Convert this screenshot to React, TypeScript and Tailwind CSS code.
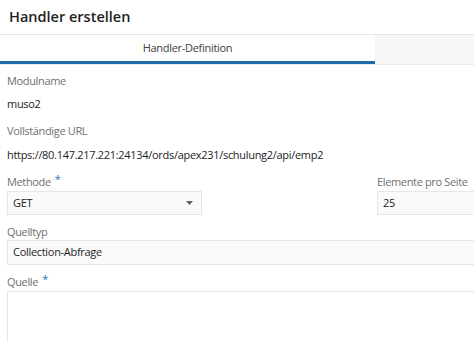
const label = "text-[11px] leading-[16px] tracking-[-0.35px] text-[#707070] whitespace-nowrap";
const value = "text-[11px] leading-[16px] tracking-[-0.3px] text-[#1d1d1d] whitespace-nowrap";
const box = "bg-[#fafafa] border border-[#e6e6e6] flex items-center px-[5px] text-[11px] tracking-[-0.3px] text-[#1d1d1d]";

function Req() {
  return <span className="text-[#2a7ab8] text-[11px] relative -top-[3px] ml-[4px]">*</span>;
}

export default function App() {
  return (
    <div className="w-[474px] h-[342px] overflow-hidden bg-white font-['Open_Sans',sans-serif]">
      {/* Header */}
      <div className="h-[35px] pl-[9px] pt-[7px] border-b border-[#e6e6e6]">
        <h1 className="text-[14.5px] leading-[20px] font-semibold text-[#1f1f1f]">Handler erstellen</h1>
      </div>

      {/* Tabs */}
      <div className="flex h-[30px] border-b border-[#ebebeb]">
        <div className="w-[375px] flex items-center justify-center border-b-[3px] border-[#1f6aa6] text-[11px] tracking-[-0.3px] text-[#404040]">
          Handler-Definition
        </div>
        <div className="flex-1 bg-[#f6f6f6]" />
      </div>

      {/* Form */}
      <div className="pl-[7px] pt-[8px]">
        <div className={label}>Modulname</div>
        <div className={`${value} mt-[7px]`}>muso2</div>
        <div className={`${label} mt-[11px]`}>Vollständige URL</div>
        <div className={`${value} mt-[8px]`}>https://80.147.217.221:24134/ords/apex231/schulung2/api/emp2</div>

        <div className="flex mt-[11px]">
          <div className="w-[195px] shrink-0">
            <div className={label}>
              Methode<Req />
            </div>
            <div className={`${box} h-[24px] mt-[1px] justify-between`}>
              <span>GET</span>
              <svg width="7" height="4" viewBox="0 0 7 4" className="mr-[3px]">
                <path d="M0 0h7L3.5 4z" fill="#606060" />
              </svg>
            </div>
          </div>
          <div className="ml-[175px] flex-1 min-w-0">
            <div className={label}>Elemente pro Seite</div>
            <div className={`${box} h-[24px] mt-[1px] border-r-0`}>25</div>
          </div>
        </div>

        <div className={`${label} mt-[9px]`}>Quelltyp</div>
        <div className={`${box} h-[25px] border-r-0`}>Collection-Abfrage</div>

        <div className={`${label} mt-[9px]`}>
          Quelle<Req />
        </div>
        <div className="mt-[1px] h-[60px] border border-r-0 border-[#e6e6e6] bg-white" />
      </div>
    </div>
  );
}
